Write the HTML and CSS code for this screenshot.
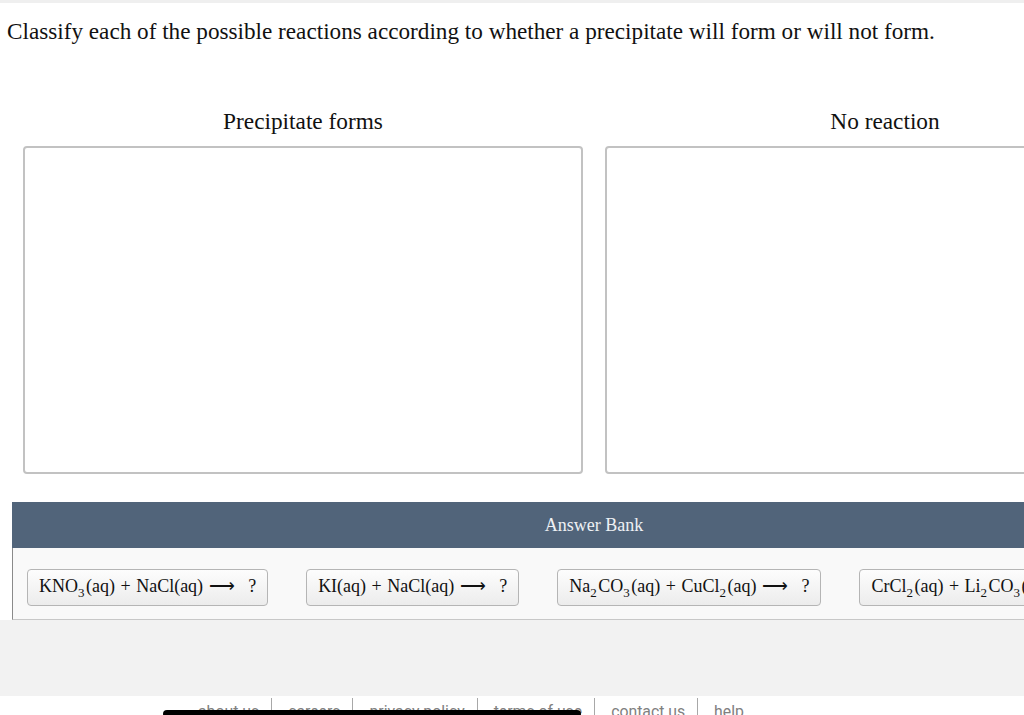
FILE: index.html
```html
<!DOCTYPE html>
<html>
<head>
<meta charset="utf-8">
<link rel="stylesheet" href="styles.css">
</head>
<body>
<div class="topstrip"></div>
<p class="prompt">Classify each of the possible reactions according to whether a precipitate will form or will not form.</p>
<div class="columns">
  <div class="col">
    <div class="col-label">Precipitate forms</div>
    <div class="dropbox"></div>
  </div>
  <div class="col">
    <div class="col-label">No reaction</div>
    <div class="dropbox"></div>
  </div>
</div>
<div class="bank">
  <div class="bank-head">Answer Bank</div>
  <div class="bank-body">
    <div class="chip">KNO<sub>3</sub>(aq)<span class="op">+</span>NaCl(aq)<span class="arr">⟶</span>?</div>
    <div class="chip">KI(aq)<span class="op">+</span>NaCl(aq)<span class="arr">⟶</span>?</div>
    <div class="chip">Na<sub>2</sub>CO<sub>3</sub>(aq)<span class="op">+</span>CuCl<sub>2</sub>(aq)<span class="arr">⟶</span>?</div>
    <div class="chip">CrCl<sub>2</sub>(aq)<span class="op">+</span>Li<sub>2</sub>CO<sub>3</sub>(aq)<span class="arr">⟶</span>?</div>
  </div>
</div>
<div class="grayarea"></div>
<div class="footer">
  <a class="flink">about us</a>
  <a class="flink">careers</a>
  <a class="flink">privacy policy</a>
  <a class="flink">terms of use</a>
  <a class="flink">contact us</a>
  <a class="flink last">help</a>
  <div class="scrollthumb"></div>
</div>
</body>
</html>
```
FILE: styles.css
```css
html, body {
  margin: 0;
  padding: 0;
  overflow: hidden;
  background: #ffffff;
}
body {
  width: 1200px;
  font-family: "Liberation Serif", "Times New Roman", serif;
  color: #111;
}
.topstrip {
  height: 3px;
  background: #efefef;
}
.prompt {
  margin: 0;
  padding: 15px 0 0 7px;
  font-size: 23.2px;
  line-height: 27px;
}
.columns {
  display: flex;
  gap: 22px;
  padding-left: 23px;
  margin-top: 63px;
}
.col {
  width: 560px;
}
.col-label {
  text-align: center;
  font-size: 23.3px;
  line-height: 26px;
  margin-bottom: 12px;
}
.dropbox {
  height: 324px;
  border: 2px solid #c2c2c2;
  border-radius: 4px;
  background: #fff;
}
.bank {
  margin: 28px 0 0 12px;
  width: 1164px;
}
.bank-head {
  height: 46px;
  background: #51647a;
  color: #eef1f4;
  font-size: 18px;
  line-height: 46px;
  text-align: center;
}
.bank-body {
  display: flex;
  gap: 38px;
  padding: 21px 14px 13px 14px;
  background: #f9f9f9;
  border-left: 1px solid #8a8a8a;
  border-bottom: 1px solid #c8c8c8;
  white-space: nowrap;
}
.chip {
  flex: none;
  height: 35px;
  line-height: 33px;
  padding: 0 11px;
  border: 1px solid #b5b5b5;
  border-radius: 4px;
  background: linear-gradient(#fdfdfd, #ececec);
  font-size: 18px;
  color: #111;
}
.chip sub {
  font-size: 13px;
  line-height: 0;
  vertical-align: -5px;
  margin-right: 1.5px;
}
.op {
  margin: 0 5.5px;
}
.arr {
  margin: 0 13px 0 6px;
}
.grayarea {
  height: 76px;
  background: #f2f2f2;
}
.footer {
  position: relative;
  height: 40px;
  background: #fff;
  display: flex;
  padding-left: 182px;
  font-family: Roboto, "Liberation Sans", sans-serif;
  font-size: 15.8px;
  color: #808080;
}
.flink {
  display: block;
  padding: 4px 12px 0 16px;
  height: 30px;
  border-right: 1px solid #a8a8a8;
  margin-top: 2px;
}
.flink.last {
  border-right: none;
}
.scrollthumb {
  position: absolute;
  left: 163px;
  top: 14px;
  width: 418px;
  height: 8px;
  background: #000;
  border-radius: 4px;
}
```
